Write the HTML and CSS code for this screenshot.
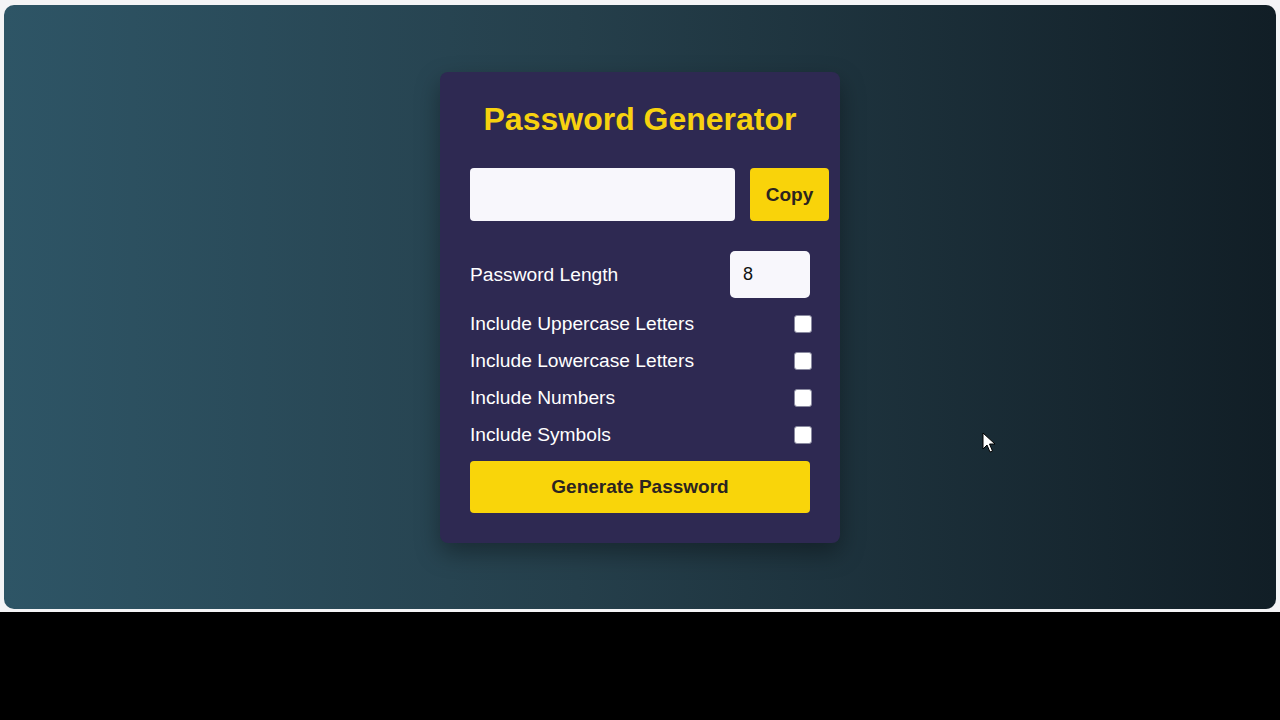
FILE: index.html
```html
<!DOCTYPE html>
<html lang="en">
<head>
<meta charset="utf-8">
<title>Password Generator</title>
<link rel="stylesheet" href="styles.css">
</head>
<body>
<div class="frame">
  <main class="stage">
    <section class="card">
      <h1 class="title">Password Generator</h1>
      <div class="result-row">
        <input class="result" type="text" readonly>
        <button class="copy-btn">Copy</button>
      </div>
      <div class="option length-row">
        <label class="label" for="len">Password Length</label>
        <input class="num" id="len" type="text" value="8">
      </div>
      <div class="option">
        <span class="label">Include Uppercase Letters</span>
        <span class="check"></span>
      </div>
      <div class="option">
        <span class="label">Include Lowercase Letters</span>
        <span class="check"></span>
      </div>
      <div class="option">
        <span class="label">Include Numbers</span>
        <span class="check"></span>
      </div>
      <div class="option">
        <span class="label">Include Symbols</span>
        <span class="check"></span>
      </div>
      <button class="gen-btn">Generate Password</button>
    </section>
    <svg class="cursor" width="14" height="22" viewBox="0 0 14 22"><path d="M1 1 L1 17 L5 13 L8 20 L10.5 19 L7.5 12 L13 12 Z" fill="#fff" stroke="#000" stroke-width="1"/></svg>
  </main>
</div>
</body>
</html>
```
FILE: styles.css
```css
* { box-sizing: border-box; }
html, body { margin: 0; padding: 0; }
body {
  background: #000;
  width: 1280px;
  height: 720px;
  overflow: hidden;
  font-family: "Liberation Sans", Arial, sans-serif;
}
.frame {
  height: 612px;
  background: #f4f4f6;
  padding: 5px 4px 3px 4px;
}
.stage {
  position: relative;
  height: 100%;
  border-radius: 10px;
  background: linear-gradient(to right, #2e5566 0%, #253f4b 45%, #111e26 100%);
  display: flex;
  justify-content: center;
  align-items: flex-start;
  padding-top: 67px;
}
.card {
  width: 400px;
  background: #2e2952;
  border-radius: 8px;
  padding: 30px;
  box-shadow: 0 10px 25px rgba(0, 0, 0, 0.35);
  display: flex;
  flex-direction: column;
}
.title {
  margin: 0;
  color: #f7d20f;
  font-size: 32px;
  line-height: 34px;
  font-weight: bold;
  text-align: center;
}
.result-row {
  display: flex;
  gap: 15px;
  margin-top: 32px;
  width: 359px;
}
.result {
  width: 265px;
  height: 53px;
  border: none;
  border-radius: 4px;
  background: #f8f7fc;
  font-family: inherit;
  font-size: 18px;
  padding: 0 10px;
}
.copy-btn {
  width: 79px;
  height: 53px;
  border: none;
  border-radius: 4px;
  background: #f9d30a;
  color: #2b2420;
  font-family: inherit;
  font-weight: bold;
  font-size: 19px;
  padding: 0;
}
.option {
  display: flex;
  justify-content: space-between;
  align-items: center;
  margin-top: 15px;
  height: 22px;
  color: #ffffff;
  font-size: 19.2px;
}
.length-row {
  margin-top: 30px;
  height: 47px;
}
.num {
  width: 80px;
  height: 47px;
  border: none;
  border-radius: 5px;
  background: #f8f7fc;
  font-family: inherit;
  font-size: 18px;
  padding: 0 13px;
  color: #111;
}
.check {
  width: 18px;
  height: 18px;
  background: #fff;
  border: 1px solid #8a8aa0;
  border-radius: 3px;
  margin-right: -2px;
}
.gen-btn {
  margin-top: 15px;
  height: 52px;
  width: 100%;
  border: none;
  border-radius: 4px;
  background: #f9d50a;
  color: #2b2420;
  font-family: inherit;
  font-weight: bold;
  font-size: 19px;
}
.cursor {
  position: absolute;
  left: 978px;
  top: 427px;
}
```
